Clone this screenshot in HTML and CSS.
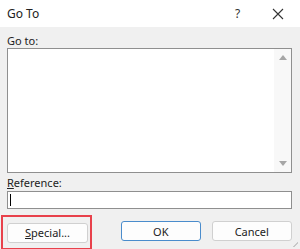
FILE: index.html
```html
<!DOCTYPE html>
<html lang="en">
<head>
    <meta charset="UTF-8">
    <title>Go To</title>
    <link rel="stylesheet" href="styles.css">
</head>
<body>
<div class="dialog">
    <div class="titlebar">
        <span class="title">Go To</span>
        <span class="help">?</span>
        <span class="close">
            <svg width="12" height="12" viewBox="0 0 12 12"><path d="M1 1 L11 11 M11 1 L1 11" stroke="#333" stroke-width="1.1" fill="none"/></svg>
        </span>
    </div>
    <div class="content">
        <div class="label first">Go to:</div>
        <div class="listbox">
            <div class="list-area"></div>
            <div class="scrollbar">
                <span class="arrow up"></span>
                <span class="arrow down"></span>
            </div>
        </div>
        <div class="label"><u>R</u>eference:</div>
        <div class="input"><span class="caret"></span></div>
        <div class="buttons">
            <div class="highlight">
                <button class="btn"><u>S</u>pecial...</button>
            </div>
            <button class="btn default">OK</button>
            <button class="btn">Cancel</button>
        </div>
    </div>
    <div class="grip"></div>
</div>
</body>
</html>
```

FILE: styles.css
```css
* {
    box-sizing: border-box;
}

body {
    margin: 0;
    width: 300px;
    height: 249px;
    overflow: hidden;
    font-family: "Segoe UI", "Noto Sans", "Open Sans", sans-serif;
    color: #222;
}

.dialog {
    position: relative;
    height: 249px;
    background-color: #f0f0f0;
}

.titlebar {
    display: flex;
    align-items: center;
    height: 27px;
    background-color: #ffffff;
    padding-left: 7px;
}

.title {
    font-size: 12px;
    flex: 1;
}

.help {
    font-size: 12px;
    width: 21px;
    color: #333;
}

.close {
    display: flex;
    align-items: center;
    justify-content: center;
    width: 44px;
    height: 27px;
}

.content {
    padding: 0 8px 0 7px;
}

.label {
    font-size: 11px;
    line-height: 14px;
    height: 14px;
    margin-top: 3px;
}

.label.first {
    margin-top: 7px;
}

.listbox {
    display: flex;
    height: 125px;
    border: 1px solid #8f8f8f;
    background-color: #ffffff;
}

.list-area {
    flex: 1;
}

.scrollbar {
    width: 17px;
    background-color: #f8f8f8;
    display: flex;
    flex-direction: column;
    justify-content: space-between;
    align-items: center;
    padding: 6px 0 6px 0;
}

.arrow {
    width: 0;
    height: 0;
    border-left: 4px solid transparent;
    border-right: 4px solid transparent;
}

.arrow.up {
    border-bottom: 5px solid #a6a6a6;
}

.arrow.down {
    border-top: 5px solid #a6a6a6;
}

.input {
    height: 18px;
    margin-top: 1px;
    border: 1px solid #8f8f8f;
    background-color: #ffffff;
    padding: 2px 2px;
}

.caret {
    display: block;
    width: 1px;
    height: 12px;
    background-color: #000;
}

.buttons {
    display: flex;
    align-items: center;
    margin-top: 11px;
}

.highlight {
    position: relative;
    margin-right: 33px;
}

.highlight::after {
    content: "";
    position: absolute;
    left: -6px;
    right: -4px;
    top: -5px;
    bottom: -7px;
    border: 2px solid #e8414b;
}

.btn {
    width: 81px;
    height: 20px;
    padding: 0;
    font-family: "Segoe UI", "Noto Sans", "Open Sans", sans-serif;
    font-size: 11px;
    color: #222;
    background-color: #fdfdfd;
    border: 1px solid #d0d0d0;
    border-radius: 3px;
}

.btn.default {
    width: 80px;
    margin-right: 11px;
    border-color: #4a8ccc;
}

.grip {
    position: absolute;
    right: 2px;
    bottom: 2px;
    width: 6px;
    height: 6px;
    background: linear-gradient(135deg, transparent 55%, #c8c8c8 55%, #c8c8c8 70%, transparent 70%);
}
```
